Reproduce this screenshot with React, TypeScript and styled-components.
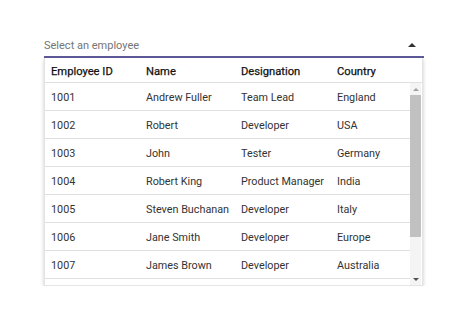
import * as React from "react";
import styled, { createGlobalStyle } from "styled-components";

const GlobalStyle = createGlobalStyle`
  html, body {
    margin: 0;
    padding: 0;
    background: #ffffff;
  }
  body {
    font-family: Roboto, "Noto Sans", Arial, sans-serif;
  }
`;

interface Employee {
  id: string;
  name: string;
  designation: string;
  country: string;
}

const employees: Employee[] = [
  { id: "1001", name: "Andrew Fuller", designation: "Team Lead", country: "England" },
  { id: "1002", name: "Robert", designation: "Developer", country: "USA" },
  { id: "1003", name: "John", designation: "Tester", country: "Germany" },
  { id: "1004", name: "Robert King", designation: "Product Manager", country: "India" },
  { id: "1005", name: "Steven Buchanan", designation: "Developer", country: "Italy" },
  { id: "1006", name: "Jane Smith", designation: "Developer", country: "Europe" },
  { id: "1007", name: "James Brown", designation: "Developer", country: "Australia" },
];

const Page = styled.div`
  padding: 28px 50px 0 44px;
`;

const Combo = styled.div`
  width: 380px;
`;

const InputBar = styled.div`
  display: flex;
  align-items: center;
  justify-content: space-between;
  height: 28px;
  border-bottom: 2px solid #5f5b9c;
`;

const Placeholder = styled.span`
  font-size: 11px;
  color: #757575;
  padding-top: 6px;
`;

const Caret = styled.span`
  width: 0;
  height: 0;
  margin-top: 6px;
  margin-right: 8px;
  border-left: 4px solid transparent;
  border-right: 4px solid transparent;
  border-bottom: 4px solid #333333;
`;

const Popup = styled.div`
  width: 377px;
  border: 1px solid #e4e4e4;
  border-top: none;
  background: #ffffff;
  box-shadow: 0 2px 4px rgba(0, 0, 0, 0.18), 0 0 2px rgba(0, 0, 0, 0.06);
`;

const cols = "95px 95px 96px 1fr";

const HeaderRow = styled.div`
  display: grid;
  grid-template-columns: ${cols};
  align-items: center;
  height: 24px;
  border-bottom: 1px solid #e0e0e0;
`;

const HeadCell = styled.div`
  padding: 2px 0 0 6px;
  font-size: 11.2px;
  font-weight: 400;
  color: #111111;
  -webkit-text-stroke: 0.25px #111111;
  white-space: nowrap;
`;

const Body = styled.div`
  display: flex;
  height: 202px;
`;

const List = styled.div`
  flex: 1;
  overflow: hidden;
`;

const Row = styled.div`
  display: grid;
  grid-template-columns: ${cols};
  align-items: center;
  height: 27px;
  border-bottom: 1px solid #e0e0e0;
`;

const Cell = styled.div`
  padding: 2px 0 0 6px;
  font-size: 10.8px;
  color: #333333;
  white-space: nowrap;
`;

const Scrollbar = styled.div`
  width: 11px;
  margin-right: 1px;
  display: flex;
  flex-direction: column;
  align-items: center;
  background: #f4f4f4;
`;

const ArrowBox = styled.div`
  height: 12px;
  width: 100%;
  display: flex;
  align-items: center;
  justify-content: center;
`;

const Arrow = styled.span<{ $down?: boolean }>`
  width: 0;
  height: 0;
  border-left: 3px solid transparent;
  border-right: 3px solid transparent;
  ${(p) =>
    p.$down
      ? "border-top: 3px solid #505050;"
      : "border-bottom: 3px solid #a0a0a0;"}
`;

const Thumb = styled.div`
  width: 100%;
  height: 142px;
  background: #c1c1c1;
`;

const Track = styled.div`
  flex: 1;
`;

const App: React.FC = () => (
  <Page>
    <GlobalStyle />
    <Combo>
      <InputBar>
        <Placeholder>Select an employee</Placeholder>
        <Caret />
      </InputBar>
      <Popup>
        <HeaderRow>
          <HeadCell>Employee ID</HeadCell>
          <HeadCell>Name</HeadCell>
          <HeadCell>Designation</HeadCell>
          <HeadCell>Country</HeadCell>
        </HeaderRow>
        <Body>
          <List>
            {employees.map((e) => (
              <Row key={e.id}>
                <Cell>{e.id}</Cell>
                <Cell>{e.name}</Cell>
                <Cell>{e.designation}</Cell>
                <Cell>{e.country}</Cell>
              </Row>
            ))}
          </List>
          <Scrollbar>
            <ArrowBox>
              <Arrow />
            </ArrowBox>
            <Thumb />
            <Track />
            <ArrowBox>
              <Arrow $down />
            </ArrowBox>
          </Scrollbar>
        </Body>
      </Popup>
    </Combo>
  </Page>
);

export default App;
